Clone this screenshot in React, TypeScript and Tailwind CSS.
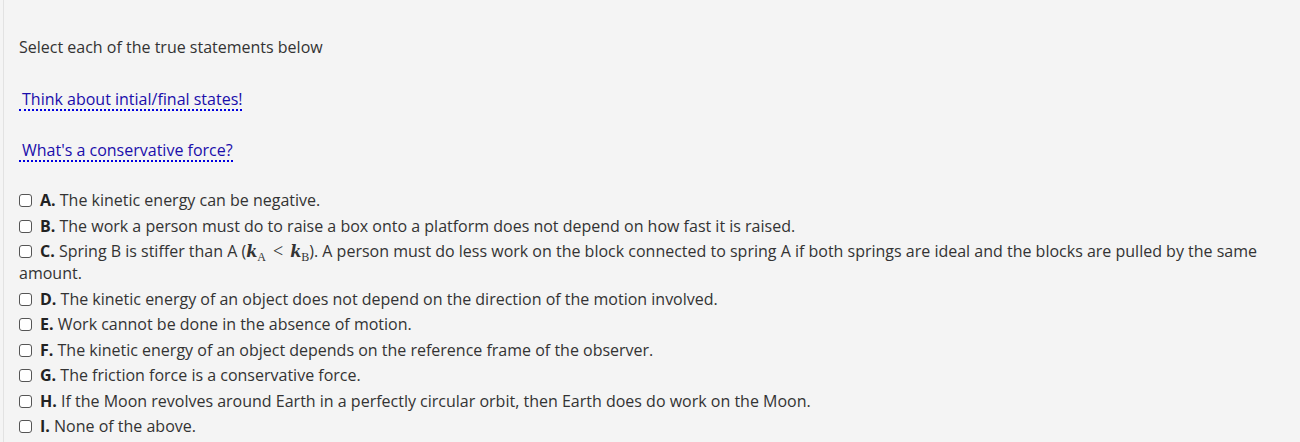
import React from "react";

const serif = { fontFamily: '"Liberation Serif", serif' };
const kFont = { fontFamily: '"DejaVu Serif", serif' };

const options: { l: string; t: React.ReactNode }[] = [
  { l: "A.", t: "The kinetic energy can be negative." },
  { l: "B.", t: "The work a person must do to raise a box onto a platform does not depend on how fast it is raised." },
  {
    l: "C.",
    t: (
      <>
        Spring B is stiffer than A (
        <span style={kFont} className="italic font-bold text-[16px] leading-none">k</span>
        <span style={serif} className="relative top-[4px] text-[12px] leading-none">A</span>
        <span className="mx-[7px] text-[18px] leading-none" style={serif}>&lt;</span>
        <span style={kFont} className="italic font-bold text-[16px] leading-none">k</span>
        <span style={serif} className="relative top-[4px] text-[12px] leading-none">B</span>
        ). A person must do less work on the block connected to spring A if both springs are ideal and the blocks are pulled by the same amount.
      </>
    ),
  },
  { l: "D.", t: "The kinetic energy of an object does not depend on the direction of the motion involved." },
  { l: "E.", t: "Work cannot be done in the absence of motion." },
  { l: "F.", t: "The kinetic energy of an object depends on the reference frame of the observer." },
  { l: "G.", t: "The friction force is a conservative force." },
  { l: "H.", t: "If the Moon revolves around Earth in a perfectly circular orbit, then Earth does do work on the Moon." },
  { l: "I.", t: "None of the above." },
];

export default function App() {
  return (
    <div
      className="w-[1300px] h-[442px] bg-[#f4f4f4] text-[#333] text-[16px] overflow-hidden"
      style={{ fontFamily: '"Open Sans", sans-serif' }}
    >
      <div className="ml-[3px] h-full border-l border-[#e2e2e2] pl-[15px] pt-[36px]">
        <p className="leading-[22px]">Select each of the true statements below</p>
        <div className="mt-[29px]">
          <a className="inline-block pl-[3px] text-[#1a0dab] leading-[20px] border-b-2 border-dotted border-[#0000e0]">
            Think about intial/final states!
          </a>
        </div>
        <div className="mt-[27px]">
          <a className="inline-block pl-[3px] text-[#1a0dab] leading-[20px] border-b-2 border-dotted border-[#0000e0]">
            What's a conservative force?
          </a>
        </div>
        <div className="mt-[27px] pr-[16px]">
          {options.map((o) => (
            <div key={o.l} className="leading-[22px] mb-[3.5px]">
              <span className="inline-block w-[13px] h-[13px] border border-[#555] rounded-[3px] bg-white align-[-1px] mr-[8px]" />
              <b className="font-bold text-[#222]">{o.l}</b> {o.t}
            </div>
          ))}
        </div>
      </div>
    </div>
  );
}
